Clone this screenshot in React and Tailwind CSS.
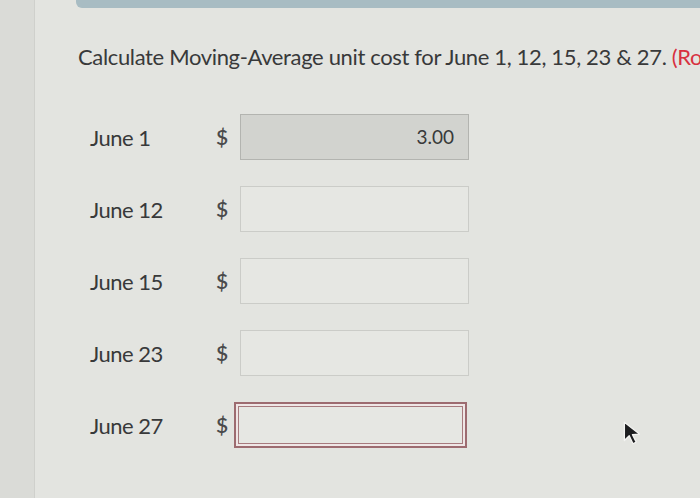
import React from 'react';

const rows = [
  { label: 'June 1', value: '3.00', filled: true },
  { label: 'June 12', value: '' },
  { label: 'June 15', value: '' },
  { label: 'June 23', value: '' },
  { label: 'June 27', value: '', active: true },
];

const Cursor = () => (
  <svg width="24" height="28" viewBox="0 0 22 26" className="absolute left-[621px] top-[419px]">
    <path d="M3 3 L3 20 L7.5 15.5 L11 23 L14 21.5 L10.5 14.5 L17 14 Z" fill="#1c1d1f" stroke="#f4f4f2" strokeWidth="1.2" strokeLinejoin="round" />
  </svg>
);

export default function App() {
  return (
    <div className="relative flex w-[700px] h-[498px] overflow-hidden bg-[#e3e4e0] text-[#38393a]" style={{ fontFamily: 'Lato, "Open Sans", sans-serif' }}>
      <div className="w-[35px] shrink-0 bg-[#dadbd7] border-r border-[#cfd0cc]" />
      <div className="flex-1 flex flex-col min-w-0">
        <div className="ml-[41px] h-[8px] bg-[#a8bcc3] rounded-bl-md" />
        <div className="mt-[34px] pl-[43px] whitespace-nowrap overflow-hidden text-[22px] leading-[30px] tracking-[-0.35px]">
          Calculate Moving-Average unit cost for June 1, 12, 15, 23 &amp; 27.{' '}
          <span className="text-[#d8303f]">(Round answers to 2 decimal places.)</span>
        </div>
        <div className="mt-[42px] flex flex-col gap-[26px] pl-[55px]">
          {rows.map((r) => (
            <div key={r.label} className="flex items-center h-[46px]">
              <div className="w-[126px] text-[22px] tracking-[-0.5px]">{r.label}</div>
              <div className="w-[24px] text-[21px] font-semibold text-[#4a4b4c]">$</div>
              {r.active ? (
                <div className="w-[233px] h-[46px] -ml-[6px] border-2 border-[#9d6b70] p-[2px] bg-[#efe6e6]">
                  <div className="w-full h-full border border-[#a77a7e] bg-[#e6e7e3]" />
                </div>
              ) : (
                <div
                  className={`w-[229px] h-[46px] flex items-center justify-end pr-[14px] text-[19px] ${
                    r.filled ? 'bg-[#d2d3cf] border border-[#b3b4b0]' : 'bg-[#e6e7e3] border border-[#cbccc8]'
                  }`}
                >
                  {r.value}
                </div>
              )}
            </div>
          ))}
        </div>
      </div>
      <Cursor />
    </div>
  );
}
